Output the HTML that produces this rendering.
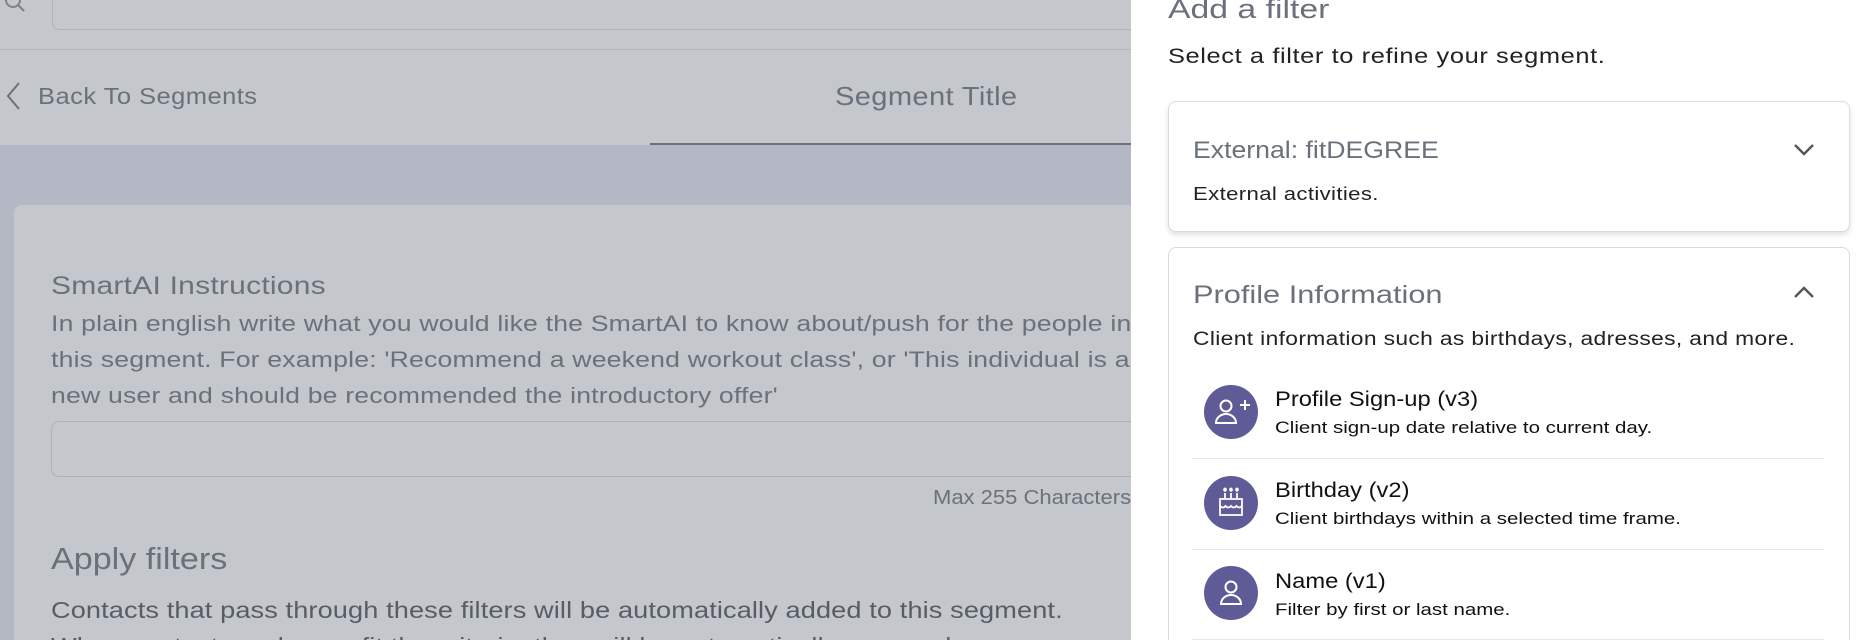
<!DOCTYPE html>
<html style="width:1860px;height:640px;overflow:hidden"><head><meta charset="utf-8"><style>
*{margin:0;padding:0;box-sizing:border-box}
body{width:1860px;height:640px;overflow:hidden;position:relative;background:#b4b8c4;font-family:"Liberation Sans",sans-serif}
.a{position:absolute;white-space:nowrap;transform-origin:0 50%}
.left{position:absolute;left:0;top:0;width:1131px;height:640px;overflow:hidden}
.panel{position:absolute;left:1131px;top:0;width:729px;height:640px;background:#fff;overflow:hidden}
.card{position:absolute;left:37px;width:682px;border:1px solid #d9dbe3;border-radius:8px;background:#fff;box-shadow:0 3px 6px rgba(0,0,0,.12)}
.circ{position:absolute;width:54px;height:54px;border-radius:50%;background:#5f5b97;left:73px}
.it{position:absolute;left:144px;color:#111;white-space:nowrap}
.it b{font-weight:normal;font-size:21px;display:block;line-height:26px;transform:scaleX(1.13);transform-origin:0 50%}
.it span{font-size:16.5px;display:block;line-height:22px;margin-top:4px;transform:scaleX(1.24);transform-origin:0 50%}
.sep{position:absolute;left:61px;width:632px;height:1px;background:#e8e9ee}
</style></head><body>
<div class="left">
 <div class="a" style="left:0;top:0;width:1131px;height:145px;background:#c4c7cc"></div>
 <div class="a" style="left:52px;top:-10px;width:1100px;height:40px;border:1px solid #b0b4bc;border-radius:8px"></div>
 <svg class="a" style="left:4px;top:0" width="30" height="14"><circle cx="9" cy="0" r="7" fill="none" stroke="#7d828c" stroke-width="2"/><line x1="14" y1="5" x2="20" y2="11" stroke="#7d828c" stroke-width="2.2"/></svg>
 <div class="a" style="left:0;top:49px;width:1131px;height:1px;background:#b3b6bd"></div>
 <svg class="a" style="left:3px;top:81px" width="20" height="32"><path d="M16 2 L5 15 L16 28" fill="none" stroke="#6b717c" stroke-width="2"/></svg>
 <div class="a" style="left:38px;top:82px;font-size:23px;line-height:28px;color:#6b717c;letter-spacing:.4px;transform:scaleX(1.11)">Back To Segments</div>
 <div class="a" style="left:835px;top:80px;font-size:26px;line-height:32px;color:#6b717c;letter-spacing:.3px;transform:scaleX(1.12)">Segment Title</div>
 <div class="a" style="left:650px;top:143px;width:481px;height:2px;background:#6b717c"></div>
 <div class="a" style="left:14px;top:205px;width:1140px;height:435px;background:#c4c7cc;border-radius:8px 8px 0 0"></div>
 <div class="a" style="left:51px;top:271px;font-size:25px;line-height:30px;color:#6b717c;letter-spacing:.2px;transform:scaleX(1.2)">SmartAI Instructions</div>
 <div class="a" style="left:51px;top:306px;font-size:22px;line-height:36px;color:#6b717c;letter-spacing:.15px;transform:scaleX(1.21)">In plain english write what you would like the SmartAI to know about/push for the people in<br>this segment. For example: 'Recommend a weekend workout class', or 'This individual is a<br>new user and should be recommended the introductory offer'</div>
 <div class="a" style="left:51px;top:421px;width:1120px;height:56px;border:1px solid #adb1b9;border-radius:8px"></div>
 <div class="a" style="left:933px;top:486px;font-size:20px;line-height:24px;color:#6b717c;transform:scaleX(1.1)">Max 255 Characters</div>
 <div class="a" style="left:51px;top:540px;font-size:31px;line-height:38px;color:#6b717c;transform:scaleX(1.1)">Apply filters</div>
 <div class="a" style="left:51px;top:592px;font-size:23px;line-height:36px;color:#575c66;letter-spacing:.1px;transform:scaleX(1.18);transform-origin:0 0">Contacts that pass through these filters will be automatically added to this segment.<br>When contacts no longer fit the criteria, they will be automatically removed.</div>
</div>
<div class="panel">
 <div class="a" style="left:37px;top:-8px;font-size:27px;line-height:34px;color:#6b717c;transform:scaleX(1.25)">Add a filter</div>
 <div class="a" style="left:37px;top:44px;font-size:21px;line-height:26px;color:#222;letter-spacing:.5px;transform:scaleX(1.21)">Select a filter to refine your segment.</div>
 <div class="card" style="top:101px;height:131px">
  <div class="a" style="left:24px;top:34px;font-size:24px;line-height:30px;color:#6b717c;transform:scaleX(1.11)">External: fitDEGREE</div>
  <svg class="a" style="left:623px;top:40px" width="24" height="16"><path d="M3 3 L12 12 L21 3" fill="none" stroke="#555" stroke-width="2.4"/></svg>
  <div class="a" style="left:24px;top:80px;font-size:18px;line-height:24px;color:#222;letter-spacing:.3px;transform:scaleX(1.23)">External activities.</div>
 </div>
 <div class="card" style="top:247px;height:420px;box-shadow:none">
  <div class="a" style="left:24px;top:31px;font-size:25px;line-height:32px;color:#6b717c;transform:scaleX(1.23)">Profile Information</div>
  <svg class="a" style="left:623px;top:36px" width="24" height="16"><path d="M3 13 L12 4 L21 13" fill="none" stroke="#555" stroke-width="2.4"/></svg>
  <div class="a" style="left:24px;top:80px;font-size:19px;line-height:24px;color:#222;letter-spacing:.3px;transform:scaleX(1.2)">Client information such as birthdays, adresses, and more.</div>
 </div>
 <div class="circ" style="top:385px"><svg width="54" height="54"><circle cx="22" cy="21" r="5.5" fill="none" stroke="#fff" stroke-width="2"/><path d="M12 38 a10 9 0 0 1 20 0 Z" fill="none" stroke="#fff" stroke-width="2"/><path d="M36 20 h10 M41 15 v10" stroke="#fff" stroke-width="2"/></svg></div>
 <div class="it" style="top:387px"><b>Profile Sign-up (v3)</b><span>Client sign-up date relative to current day.</span></div>
 <div class="sep" style="top:458px"></div>
 <div class="circ" style="top:476px"><svg width="54" height="54"><g fill="none" stroke="#fff" stroke-width="1.8"><path d="M21 17 v5 M27 17 v5 M33 17 v5"/><path d="M21 12 q-2 2 0 3 q2-1 0-3 M27 12 q-2 2 0 3 q2-1 0-3 M33 12 q-2 2 0 3 q2-1 0-3"/><rect x="16" y="23" width="22" height="16"/><path d="M16 30 q3 3 5.5 0 q2.7 3 5.5 0 q2.7 3 5.5 0 q2.7 3 5.5 0"/></g></svg></div>
 <div class="it" style="top:478px"><b>Birthday (v2)</b><span>Client birthdays within a selected time frame.</span></div>
 <div class="sep" style="top:549px"></div>
 <div class="circ" style="top:566px"><svg width="54" height="54"><circle cx="27" cy="21" r="5.5" fill="none" stroke="#fff" stroke-width="2"/><path d="M17 38 a10 9 0 0 1 20 0 Z" fill="none" stroke="#fff" stroke-width="2"/></svg></div>
 <div class="it" style="top:569px"><b>Name (v1)</b><span>Filter by first or last name.</span></div>
 <div class="sep" style="top:639px"></div>
</div>
</body></html>
